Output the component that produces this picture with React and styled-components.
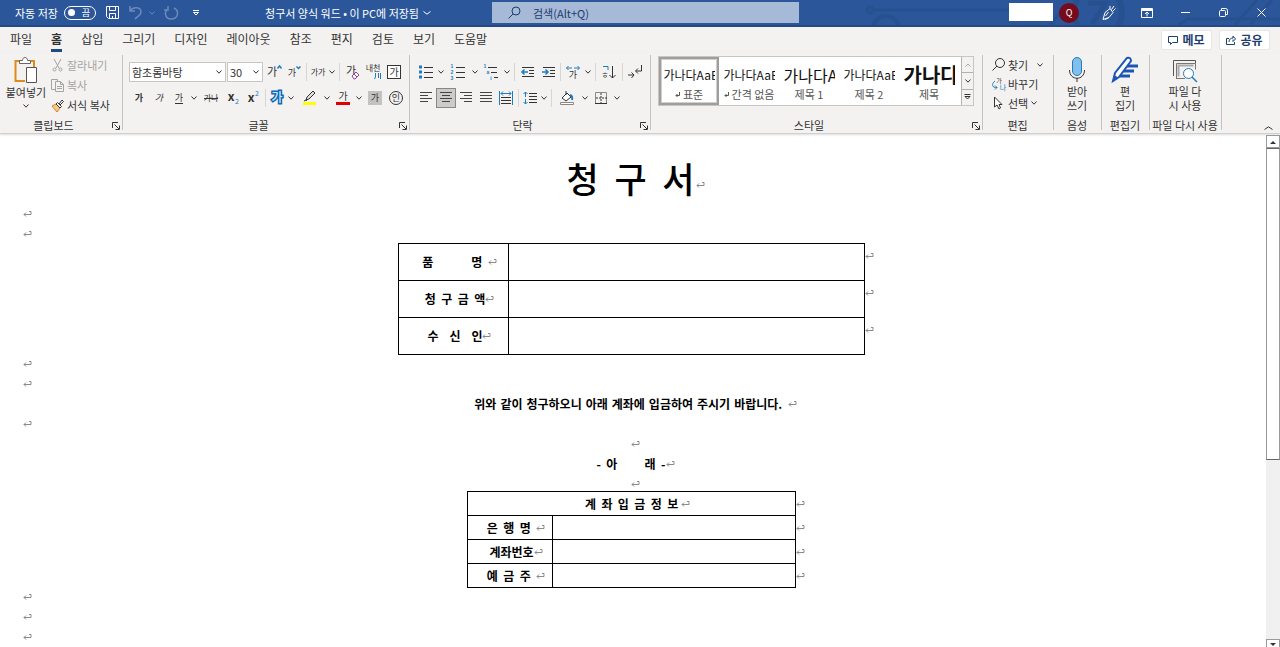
import React, { useState } from 'react';
import styled, { createGlobalStyle } from 'styled-components';

const GlobalStyle = createGlobalStyle`
  * {
    box-sizing: border-box;
  }

  body {
    margin: 0;
    background: #fff;
    color: #333;
    font-family: 'Noto Sans CJK KR', sans-serif;
    font-size: 11px;
    line-height: 14px;
  }

  button, input, select {
    font: inherit;
    color: inherit;
    margin: 0;
    padding: 0;
    border: 0;
    background: none;
  }

  svg {
    display: block;
    flex: none;
  }
`;

const App = styled.div`
  display: flex;
  flex-direction: column;
  height: 100vh;
  overflow: hidden;
`;

// Title bar
const TitleBar = styled.header`
  position: relative;
  display: grid;
  grid-template-columns: 492fr 307fr 481fr;
  align-items: center;
  height: 27px;
  flex: none;
  background: #2b579a;
  border-bottom: 2px solid #244a86;
  color: #fff;
`;

const Circuit = styled.svg`
  position: absolute;
  top: 0;
  right: 0;
`;

const TitleLeft = styled.div`
  display: flex;
  align-items: center;
  padding: 0 61px 0 15px;
`;

const AutoSave = styled.label`
  display: flex;
  align-items: center;
  gap: 6px;
  white-space: nowrap;
`;

const Switch = styled.span`
  display: flex;
  align-items: center;
  justify-content: space-between;
  width: 32px;
  height: 14px;
  padding: 0 5px 0 3px;
  border: 1px solid #fff;
  border-radius: 7px;
  font-size: 9px;
`;

const SwitchDot = styled.input`
  appearance: none;
  width: 7px;
  height: 7px;
  border-radius: 50%;
  background: #fff;
`;

const QuickButton = styled.button`
  display: flex;
  align-items: center;
  justify-content: center;
  gap: 6px;
  height: 20px;
  margin-left: 9px;
  opacity: ${props => (props.disabled ? 0.3 : 1)};
`;

const DocName = styled.button`
  display: flex;
  align-items: center;
  gap: 4px;
  margin-left: auto;
  white-space: nowrap;
`;

const SearchBox = styled.label`
  display: flex;
  align-items: center;
  gap: 12px;
  height: 21px;
  padding-left: 16px;
  background: #a6b9d6;
  color: #1c3c70;
`;

const SearchInput = styled.input`
  flex: 1;
  min-width: 0;
  outline: 0;

  &::placeholder {
    color: #1c3c70;
    opacity: 1;
  }
`;

const TitleRight = styled.div`
  position: relative;
  display: flex;
  align-items: center;
  justify-content: flex-end;
`;

const NameMask = styled.div`
  width: 44px;
  height: 18px;
  margin: 0 6px 2px 0;
  background: #fff;
`;

const Avatar = styled.button`
  width: 20px;
  height: 20px;
  margin-right: 11px;
  border-radius: 50%;
  background: #750b1c;
  font-size: 9px;
`;

const WindowButton = styled.button`
  display: flex;
  align-items: center;
  justify-content: center;
  width: 38px;
  height: 24px;
`;

// Tabs
const TabBar = styled.nav`
  display: flex;
  align-items: center;
  flex: none;
  height: 26px;
  padding-right: 10px;
  background: #f3f2f1;
  font-size: 12px;
`;

const Tabs = styled.div`
  display: flex;
  gap: 19px;
  margin-left: 10px;
`;

const Tab = styled.button`
  height: 23px;
  padding-top: 1px;
  border-bottom: 3px solid ${props => (props.$active ? '#204a87' : 'transparent')};
  font-weight: ${props => (props.$active ? 700 : 400)};
  white-space: nowrap;
`;

const TabActions = styled.div`
  display: flex;
  gap: 7px;
  margin-left: auto;
`;

const ActionButton = styled.button`
  display: flex;
  align-items: center;
  justify-content: center;
  gap: 4px;
  width: 51px;
  height: 20px;
  border: 1px solid #e6e6e6;
  border-radius: 2px;
  background: #fff;
  color: #1f3e70;
  font-weight: 700;
`;

// Ribbon
const Ribbon = styled.div`
  display: flex;
  flex: none;
  height: 81px;
  padding-top: 2px;
  background: #f3f2f1;
  border-bottom: 1px solid #d2d0ce;
  box-shadow: 0 1px 2px #ddd;
`;

const GroupBox = styled.section`
  position: relative;
  display: flex;
  flex-direction: column;
  flex: none;
  width: ${props => props.$width}px;

  &::after {
    content: '';
    position: absolute;
    top: 0;
    right: 0;
    width: 1px;
    height: 75px;
    background: #c4c2c0;
  }
`;

const GroupBody = styled.div`
  display: flex;
  flex: 1;
  flex-direction: ${props => (props.$rows ? 'column' : 'row')};
  padding: 0 6px;
`;

const GroupFooter = styled.div`
  display: flex;
  align-items: center;
  justify-content: center;
  height: 16px;
  padding-right: ${props => (props.$launcher ? 16 : 2)}px;
  white-space: nowrap;
`;

const Launcher = styled.button`
  position: absolute;
  right: 3px;
  bottom: 3px;
`;

const ToolRow = styled.div`
  display: flex;
  align-items: center;
  height: 26px;

  &:first-child {
    margin-top: 4px;
  }
`;

const Tool = styled.button`
  display: flex;
  align-items: center;
  justify-content: center;
  flex: none;
  width: ${props => props.$width || 20}px;
  height: 20px;
  border: 1px solid ${props => (props.$active ? '#8a8886' : 'transparent')};
  background: ${props => (props.$active ? '#cdcbca' : 'transparent')};
`;

const Divider = styled.span`
  flex: none;
  width: 1px;
  height: 18px;
  margin: 0 2px;
  background: #d8d6d4;
`;

const SelectWrap = styled.label`
  display: flex;
  align-items: center;
  position: relative;
  width: ${props => props.$width}px;
  height: 20px;
  margin-right: 1px;
  border: 1px solid #c8c6c4;
  background: #fff;

  svg {
    position: absolute;
    right: 3px;
    pointer-events: none;
  }
`;

const Select = styled.select`
  appearance: none;
  width: 100%;
  height: 100%;
  padding-left: 2px;
`;

const BigButton = styled.button`
  display: flex;
  flex-direction: column;
  align-items: center;
  align-self: flex-start;
  width: 100%;
  padding-right: 2px;
  white-space: nowrap;

  svg {
    margin: 1px 0;
  }
`;

const PasteButton = styled(BigButton)`
  width: 44px;
  margin-left: -2px;
  padding: 1px 0 0;

  svg + span {
    margin-bottom: 4px;
  }
`;

const SmallStack = styled.div`
  display: flex;
  flex-direction: column;
  padding: 0 3px;
`;

const SmallButton = styled.button`
  display: flex;
  align-items: center;
  gap: 3px;
  height: ${props => props.$height || 20}px;
  white-space: nowrap;
  color: ${props => (props.disabled ? '#a6a4a2' : '#333')};

  svg:last-child {
    margin-left: ${props => props.$chevronGap || 0}px;
  }
`;

// Style gallery
const Gallery = styled.div`
  display: flex;
  align-self: flex-start;
  flex: 1;
  height: 50px;
  margin: 1px 3px 0 1px;
  border: 1px solid #c8c6c4;
  background: #fff;
`;

const StyleItem = styled.button`
  display: flex;
  flex-direction: column;
  align-items: center;
  flex: none;
  width: 60px;
  height: 48px;
  padding: 0 3px;
  border: 2px solid ${props => (props.$active ? '#a09e9c' : 'transparent')};
  outline: ${props => (props.$active ? '1px solid #d0d0d0' : 'none')};
  outline-offset: -3px;
`;

const StylePreview = styled.span`
  width: 51px;
  height: 28px;
  overflow: hidden;
  color: #111;
  font-size: ${props => props.$size}px;
  font-weight: ${props => (props.$bold ? 700 : 400)};
  line-height: 32px;
  text-align: left;
  white-space: nowrap;
`;

const StyleName = styled.span`
  display: flex;
  align-items: center;
  gap: 3px;
  white-space: nowrap;
  color: #555;
`;

const GalleryScroll = styled.div`
  display: flex;
  flex-direction: column;
  width: 12px;
  margin-left: auto;
`;

const GalleryButton = styled.button`
  display: flex;
  align-items: center;
  justify-content: center;
  flex: 1;
  border: 1px solid #b4b2b0;
  border-width: 0 0 1px 1px;
  background: #f3f2f1;

  &:last-child {
    border-bottom: 0;
  }
`;

const CollapseButton = styled.button`
  align-self: flex-end;
  margin: 0 7px 3px auto;
`;

// Document
const Workspace = styled.div`
  display: flex;
  flex: 1;
  min-height: 0;
`;

const Page = styled.main`
  flex: 1;
  overflow: hidden;
  padding-right: 3px;
  color: #000;
  font-size: 12px;
  font-weight: 700;
  white-space: pre;
`;

const DocTitle = styled.h1`
  display: flex;
  align-items: center;
  justify-content: center;
  height: 70px;
  margin: 0;
  padding: 18px 0 0 8px;
  font-size: 35px;
  font-weight: 500;
  line-height: 48px;

  svg {
    margin: 13px 0 0 1px;
  }
`;

const Paragraph = styled.p`
  display: flex;
  align-items: center;
  justify-content: ${props => (props.$center ? 'center' : 'flex-start')};
  height: 20px;
  margin: 0;
  padding-left: ${props => (props.$center ? 8 : 23)}px;
`;

const FormTable = styled.table`
  width: ${props => props.$width}px;
  margin: ${props => props.$top}px auto -1px;
  border-collapse: collapse;
  table-layout: fixed;

  th, td {
    position: relative;
    height: ${props => props.$row}px;
    padding: 0;
    border: 1px solid #000;
    text-align: center;
  }

  th:not([colspan]) {
    width: ${props => props.$label}px;
  }
`;

const CellText = styled.span`
  display: flex;
  align-items: center;
  justify-content: center;
  padding-left: 12px;
`;

const RowEnd = styled.span`
  position: absolute;
  top: 8px;
  right: -10px;
`;

const ScrollBar = styled.div`
  display: flex;
  flex-direction: column;
  flex: none;
  width: 14px;
  margin-top: 1px;
  background: #f0f0f0;
`;

const ScrollButton = styled.button`
  display: flex;
  align-items: center;
  justify-content: center;
  flex: none;
  height: 13px;
  border: 1px solid #9a9a9a;
  background: #fff;

  &:last-child {
    height: 8px;
    margin-top: auto;
    border-bottom: 0;
  }
`;

const ScrollThumb = styled.div`
  height: 61%;
  border: 1px solid #9a9a9a;
  border-top-color: #666;
  border-bottom-color: #666;
  background: #fff;
`;

const BLUE = '#1e7cc0';

const Icon = ({ w = 16, h = 16, children, ...rest }) => (
  <svg
    width={w}
    height={h}
    viewBox={`0 0 ${w} ${h}`}
    fill="none"
    stroke="currentColor"
    strokeWidth="1"
    overflow="visible"
    aria-hidden="true"
    {...rest}
  >
    {children}
  </svg>
);

const Letter = ({ x = 8, y = 12, size = 11, color = '#333', weight = 400, ...rest }) => (
  <text x={x} y={y} fontSize={size} fontWeight={weight} fill={color} stroke="none" textAnchor="middle" {...rest} />
);

const ListMark = ({ x, y, children }) => (
  <Letter x={x} y={y} size={5} color={BLUE} weight={700} fontFamily="Liberation Sans, sans-serif">{children}</Letter>
);

const Chevron = ({ up, size = 6 }) => (
  <Icon w={size} h={4}>
    <path d={up ? `M.5 3.5L${size / 2} .8l${size / 2 - 0.5} 2.7` : `M.5 .5l${size / 2 - 0.5} 2.7L${size - 0.5} .5`} />
  </Icon>
);

const ReturnMark = () => (
  <Icon w={9} h={8} stroke="#8a8a8a">
    <path d="M6 1.500h2v3H1M3 2.500l-2 2 2 2" />
  </Icon>
);

const Lines = ({ rows }) => rows.map(([from, to], i) => (
  <path key={i} d={`M${from} ${2.5 + i * 3}H${to}`} stroke="#444" />
));

const MenuArrow = ({ label }) => (
  <Tool $width={10} aria-label={`${label} 옵션`}><Chevron /></Tool>
);

// Ribbon group with its caption and optional dialog launcher
const Group = ({ title, width, rows, launcher, children }) => (
  <GroupBox $width={width}>
    <GroupBody $rows={rows}>{children}</GroupBody>
    <GroupFooter $launcher={launcher}>{title}</GroupFooter>
    {launcher && (
      <Launcher aria-label={`${title} 설정`}>
        <Icon w={8} h={8}><path d="M.5 6V.5H6M2.5 2.5L7 7M7.5 3.5v4h-4" /></Icon>
      </Launcher>
    )}
  </GroupBox>
);

const TABS = ['파일', '홈', '삽입', '그리기', '디자인', '레이아웃', '참조', '편지', '검토', '보기', '도움말'];

const STYLES = [
  { name: '표준', preview: '가나다AaB', size: 12, mark: true },
  { name: '간격 없음', preview: '가나다AaB', size: 12, mark: true },
  { name: '제목 1', preview: '가나다A', size: 16 },
  { name: '제목 2', preview: '가나다AaB', size: 12 },
  { name: '제목', preview: '가나다', size: 20, bold: true },
];

const CLAIM_ROWS = ['품              명  ', '청  구  금  액', '수    신    인'];
const BANK_ROWS = ['은  행  명  ', '계좌번호', '예  금  주  '];

// The notice is set with three-per-em spaces between the words
const NOTICE = '위와 같이 청구하오니 아래 계좌에 입금하여 주시기 바랍니다.'.replaceAll(' ', '\u2004');

const TitleArea = () => (
  <TitleBar>
    <Circuit width="420" height="25" viewBox="0 0 420 25" fill="none" stroke="#27508f" strokeWidth="3" aria-hidden="true">
      <circle cx="10" cy="10" r="3" />
      <path d="M13 10H150M190 25l10-12M318 25l10-6h92M375 25l22-25M390 25l22-25" />
      <circle cx="26" cy="29" r="13" strokeWidth="4" />
      <circle cx="238" cy="12" r="24" strokeWidth="6" />
      <path d="M228 3h18L232 24" strokeWidth="5" />
    </Circuit>
    <TitleLeft>
      <AutoSave>
        자동 저장
        <Switch><SwitchDot type="checkbox" />끔</Switch>
      </AutoSave>
      <QuickButton aria-label="저장">
        <Icon w={15} h={15}>
          <path d="M1.500 1.500h12v12h-10l-2-2zM4.500 1.500v4h6v-4M4.500 13.500v-5h6v5M7.500 11v2" />
        </Icon>
      </QuickButton>
      <QuickButton aria-label="실행 취소" disabled>
        <Icon w={14} h={15} strokeWidth="1.500"><path d="M1 1v5h5M1 6c3-5 11-4 11 1 0 3-3 4-6 7" /></Icon>
        <Chevron />
      </QuickButton>
      <QuickButton aria-label="다시 실행" disabled>
        <Icon w={15} h={15} strokeWidth="1.500"><path d="M4 1v4H0M4 4C-1 8 2 14 7 14c7 0 9-8 3-11" /></Icon>
      </QuickButton>
      <QuickButton aria-label="빠른 실행 도구 모음">
        <Icon w={15} h={6}><path d="M5 .5h6M5.500 2.500L8 5l2.500-2.500z" /></Icon>
      </QuickButton>
      <DocName>청구서 양식 워드 • 이 PC에 저장됨 <Chevron size={8} /></DocName>
    </TitleLeft>
    <SearchBox>
      <Icon w={13} h={13}><circle cx="8" cy="5" r="4" /><path d="M5 8L.5 12.500" /></Icon>
      <SearchInput type="text" placeholder="검색(Alt+Q)" aria-label="검색" />
    </SearchBox>
    <TitleRight>
      <NameMask />
      <Avatar>Q</Avatar>
      <WindowButton aria-label="그리기 도구">
        <Icon w={14} h={14}><path d="M1 13.500l2-7 5-4 3 4-4 5zM3 13.500l4-2M8 2.500V0M9.500 3.500L12 0M11 5l2.500-2.500M3.500 10l3-4" /></Icon>
      </WindowButton>
      <WindowButton aria-label="리본 표시 옵션">
        <Icon w={12} h={10}><path d="M.5 .5h11v9H.5zM.5 2.500h11M6 8.500v-4M4 6l2-2 2 2" /><path d="M1 1.500h10" /></Icon>
      </WindowButton>
      <WindowButton aria-label="최소화"><Icon w={9} h={9}><path d="M0 4.500h9" /></Icon></WindowButton>
      <WindowButton aria-label="이전 크기로">
        <Icon w={9} h={9}><rect x=".5" y="2.500" width="6" height="6" rx="1" /><path d="M2.500 2V.5h4q2 0 2 2v4H7" /></Icon>
      </WindowButton>
      <WindowButton aria-label="닫기"><Icon w={9} h={9}><path d="M.5 .5l8 8M8.500 .5l-8 8" /></Icon></WindowButton>
    </TitleRight>
  </TitleBar>
);

const ClipboardGroup = () => (
  <Group title="클립보드" width={123} launcher>
    <PasteButton>
      <Icon w={24} h={27}>
        <path d="M6 4H1.500v20H11M17 4h3v6" stroke="#e08a1e" strokeWidth="2" />
        <path d="M5.500 6.500V3.500h3c0-4 5-4 5 0h3v3z" fill="#fff" stroke="#666" />
        <path d="M12.500 10.500h10v15h-10z" fill="#fff" stroke="#555" />
      </Icon>
      <span>붙여넣기</span>
      <Chevron />
    </PasteButton>
    <SmallStack>
      <SmallButton disabled>
        <Icon w={13} h={14}><path d="M3 1l5 9M10 1L5 10" /><circle cx="3.500" cy="11.500" r="1.500" /><circle cx="9.500" cy="11.500" r="1.500" /></Icon>
        잘라내기
      </SmallButton>
      <SmallButton disabled>
        <Icon w={13} h={14}><path d="M4 11.500H.5V1.500h6v2M4.500 3.500h5l3 3v7h-8zM9.500 3.500v3h3M6 8.500h5M6 10.500h5" /></Icon>
        복사
      </SmallButton>
      <SmallButton>
        <Icon w={13} h={13}>
          <path d="M1 7l4-2 4 4-3 4z" fill="#f8c98a" stroke="#d9822b" />
          <path d="M5 5l1.500-1.500 4 4L9 9zM8 5l3-4 1.500 1.500L9 6" fill="#fff" stroke="#333" />
        </Icon>
        서식 복사
      </SmallButton>
    </SmallStack>
  </Group>
);

const FontGroup = () => (
  <Group title="글꼴" width={287} rows launcher>
    <ToolRow>
      <SelectWrap $width={97}>
        <Select aria-label="글꼴"><option>함초롬바탕</option></Select>
        <Chevron />
      </SelectWrap>
      <SelectWrap $width={36}>
        <Select aria-label="글꼴 크기"><option>30</option></Select>
        <Chevron />
      </SelectWrap>
      <Tool aria-label="글꼴 크기 크게">
        <Icon><Letter x={6}>가</Letter><path d="M11.500 4.500L13.500 2l2 2.500" stroke={BLUE} strokeWidth="1.500" /></Icon>
      </Tool>
      <Tool aria-label="글꼴 크기 작게">
        <Icon><Letter x={6} size={9}>가</Letter><path d="M10.500 2.500l2 2 2-2" stroke={BLUE} strokeWidth="1.500" /></Icon>
      </Tool>
      <Divider />
      <Tool aria-label="대/소문자 바꾸기" $width={18}><Icon><Letter size={8} y={11}>가가</Letter></Icon></Tool>
      <MenuArrow label="대/소문자" />
      <Divider />
      <Tool aria-label="서식 지우기" $width={22}>
        <Icon><Letter x={6} y={11}>가</Letter><path d="M7 12l4-4 3 3-4 4H9z" fill="#fff" stroke="#8b3fa8" /><path d="M9 10l3 3" stroke="#8b3fa8" /></Icon>
      </Tool>
      <Tool aria-label="윗주 달기">
        <Icon><Letter x={7} y={7} size={8}>내천</Letter><path d="M9.500 9v4l-1 2M12.500 9v5M14.500 9v6" stroke={BLUE} /></Icon>
      </Tool>
      <Tool aria-label="문자 테두리">
        <Icon><rect x="1.500" y="1.500" width="13" height="13" fill="#fff" /><Letter size={10}>가</Letter></Icon>
      </Tool>
    </ToolRow>
    <ToolRow>
      <Tool aria-label="굵게"><Icon><Letter size={9} y={11} weight={700}>가</Letter></Icon></Tool>
      <Tool aria-label="기울임꼴"><Icon><Letter size={9} y={11} fontStyle="italic">가</Letter></Icon></Tool>
      <Tool aria-label="밑줄"><Icon><Letter size={9} y={11}>가</Letter><path d="M4 13.500h8" /></Icon></Tool>
      <MenuArrow label="밑줄" />
      <Tool aria-label="취소선" $width={24}><Icon><Letter size={8} y={11}>가나</Letter><path d="M1 8.500h14" /></Icon></Tool>
      <Tool aria-label="아래 첨자">
        <Icon><Letter x={6} y={11} size={12} weight={700}>x</Letter><Letter x={12} y={14} size={7} color={BLUE}>2</Letter></Icon>
      </Tool>
      <Tool aria-label="위 첨자">
        <Icon><Letter x={6} y={12} size={12} weight={700}>x</Letter><Letter x={12} y={6} size={7} color={BLUE}>2</Letter></Icon>
      </Tool>
      <Divider />
      <Tool aria-label="텍스트 효과" $width={18}>
        <Icon><Letter y={12} size={12} color="#c9e8fb" weight={500} stroke="#1167b1" strokeWidth="3" paintOrder="stroke">가</Letter></Icon>
      </Tool>
      <MenuArrow label="텍스트 효과" />
      <Tool aria-label="텍스트 강조 색" $width={26}>
        <Icon><path d="M5 10l1-3 6-6 2 2-6 6zM3 11l2-1 1 1" fill="#ddd" /><path d="M2 13.500h13" stroke="#ff0" strokeWidth="3" /></Icon>
      </Tool>
      <MenuArrow label="텍스트 강조" />
      <Tool aria-label="글꼴 색" $width={22}>
        <Icon><Letter y={10} size={10}>가</Letter><path d="M1 13.500h14" stroke="#e00000" strokeWidth="3" /></Icon>
      </Tool>
      <MenuArrow label="글꼴 색" />
      <Tool aria-label="문자 음영" $width={22}>
        <Icon><rect x="1" y="1" width="14" height="14" fill="#c4c2c0" stroke="none" /><Letter size={9} y={11}>가</Letter></Icon>
      </Tool>
      <Tool aria-label="원 문자"><Icon><circle cx="8" cy="8" r="6.500" /><Letter size={9} y={11}>인</Letter></Icon></Tool>
    </ToolRow>
  </Group>
);

const ParagraphGroup = () => (
  <Group title="단락" width={241} rows launcher>
    <ToolRow>
      <Tool aria-label="글머리 기호">
        <Icon><path d="M1 3h3M1 8h3M1 13h3" stroke={BLUE} strokeWidth="3" /><path d="M6 3.500h9M6 8.500h9M6 13.500h9" /></Icon>
      </Tool>
      <MenuArrow label="글머리 기호" />
      <Tool aria-label="번호 매기기" $width={24}>
        <Icon>
          <ListMark x={2} y={4}>1</ListMark><ListMark x={2} y={10}>2</ListMark><ListMark x={2} y={16}>3</ListMark>
          <path d="M6 3.500h9M6 8.500h9M6 13.500h9" />
        </Icon>
      </Tool>
      <MenuArrow label="번호" />
      <Tool aria-label="다단계 목록" $width={22}>
        <Icon>
          <ListMark x={2} y={4}>1</ListMark><ListMark x={5} y={10}>a</ListMark><ListMark x={8} y={16}>i</ListMark>
          <path d="M5 3.500h9M8 8.500h6M11 13.500h4" />
        </Icon>
      </Tool>
      <MenuArrow label="다단계 목록" />
      <Divider />
      <Tool aria-label="내어쓰기" $width={22}>
        <Icon><path d="M2 3.500h12M9 6.500h5M9 9.500h5M2 12.500h12" /><path d="M8 8H2M4.500 5.500L2 8l2.500 2.500" stroke={BLUE} strokeWidth="1.500" /></Icon>
      </Tool>
      <Tool aria-label="들여쓰기" $width={19}>
        <Icon><path d="M2 3.500h12M9 6.500h5M9 9.500h5M2 12.500h12" /><path d="M1 8h6M4.500 5.500L7 8l-2.500 2.500" stroke={BLUE} strokeWidth="1.500" /></Icon>
      </Tool>
      <Divider />
      <Tool aria-label="한글 모양">
        <Icon><Letter y={14} size={9}>가</Letter><path d="M7 4H1.500M3.500 2l-2 2 2 2M9 4h5.500M12.500 2l2 2-2 2" stroke={BLUE} /></Icon>
      </Tool>
      <MenuArrow label="한글 모양" />
      <Divider />
      <Tool aria-label="정렬" $width={22}>
        <Icon><path d="M2 2.500h5V6" stroke={BLUE} /><Letter x={4} y={14} size={8}>ㅎ</Letter><path d="M11.500 2v12M8.500 11l3 3 3-3" /></Icon>
      </Tool>
      <Divider />
      <Tool aria-label="편집 기호 표시">
        <Icon><path d="M1 11h6M4.500 8.500L7 11l-2.500 3M14.500 1v6H9M11 4.500L8.500 7 11 9.500" /></Icon>
      </Tool>
    </ToolRow>
    <ToolRow>
      <Tool aria-label="왼쪽 맞춤"><Icon><Lines rows={[[2, 14], [2, 10], [2, 14], [2, 10]]} /></Icon></Tool>
      <Tool aria-label="가운데 맞춤" $active><Icon><Lines rows={[[2, 14], [4, 12], [2, 14], [4, 12]]} /></Icon></Tool>
      <Tool aria-label="오른쪽 맞춤"><Icon><Lines rows={[[2, 14], [6, 14], [2, 14], [6, 14]]} /></Icon></Tool>
      <Tool aria-label="양쪽 맞춤"><Icon><Lines rows={[[2, 14], [2, 14], [2, 14], [2, 14]]} /></Icon></Tool>
      <Tool aria-label="균등 분할">
        <Icon><path d="M1.500 1v14M14.500 1v14M3 3.500h10M5 1.500l-2 2 2 2M11 1.500l2 2-2 2" stroke={BLUE} /><path d="M3 7.500h10M3 10.500h10M3 13.500h10" /></Icon>
      </Tool>
      <Divider />
      <Tool aria-label="줄 간격" $width={18}>
        <Icon><path d="M3.500 2v5M1.500 4l2-2 2 2M3.500 9v5M1.500 12l2 2 2-2" stroke={BLUE} /><path d="M7 3.500h8M7 6.500h8M7 9.500h8M7 12.500h8" /></Icon>
      </Tool>
      <MenuArrow label="줄 간격" />
      <Divider />
      <Tool aria-label="음영" $width={26}>
        <Icon><path d="M3 8l5-5 4 4-5 4zM7 1v4" fill="#fff" /><path d="M11 5q3 1 2 5" stroke={BLUE} strokeWidth="2" /><path d="M1.500 12.500h13v2h-13z" stroke="#888" fill="#fff" /></Icon>
      </Tool>
      <MenuArrow label="음영" />
      <Tool aria-label="테두리" $width={22}>
        <Icon><path d="M2.500 2.500h11v11h-11z" stroke="#888" /><path d="M8 3v11M3 8h11" strokeDasharray="2 1" /><path d="M2 13.500h12" /></Icon>
      </Tool>
      <MenuArrow label="테두리" />
    </ToolRow>
  </Group>
);

const StylesGroup = () => {
  const [current, setCurrent] = useState('표준');

  return (
    <Group title="스타일" width={332} launcher>
      <Gallery>
        {STYLES.map(item => (
          <StyleItem key={item.name} $active={item.name === current} onClick={() => setCurrent(item.name)}>
            <StylePreview $size={item.size} $bold={item.bold}>{item.preview}</StylePreview>
            <StyleName>
              {item.mark && <Icon w={5} h={5}><path d="M4.500 0v3.500H1M2.500 2L1 3.500 2.500 5" /></Icon>}
              {item.name}
            </StyleName>
          </StyleItem>
        ))}
        <GalleryScroll>
          <GalleryButton aria-label="위로" disabled><Icon w={6} h={4} stroke="#aaa"><path d="M.5 3.500L3 1l2.500 2.500" /></Icon></GalleryButton>
          <GalleryButton aria-label="아래로"><Chevron /></GalleryButton>
          <GalleryButton aria-label="자세히"><Icon w={7} h={6}><path d="M.5 .5h6M1 2.500L3.500 5 6 2.500z" /></Icon></GalleryButton>
        </GalleryScroll>
      </Gallery>
    </Group>
  );
};

const EditingGroups = () => (
  <>
    <Group title="편집" width={71}>
      <SmallStack>
        <SmallButton $height={19} $chevronGap={6}>
          <Icon w={13} h={13}><circle cx="8" cy="5" r="4.500" /><path d="M5 8L.5 12.500" /></Icon>
          찾기
          <Chevron />
        </SmallButton>
        <SmallButton $height={19}>
          <Icon w={13} h={14}>
            <Letter x={7} y={6} size={6}>가</Letter><Letter x={11} y={13} size={7} color={BLUE}>나</Letter>
            <path d="M3 4C-1 7 0 11 5 10.500M3 8.500l2 2-2 2" stroke={BLUE} />
          </Icon>
          바꾸기
        </SmallButton>
        <SmallButton $height={19}>
          <Icon w={13} h={13}><path d="M2.500 1v10l2.500-2 2 4 1.500-1-1.500-3.500H10z" fill="#fff" /></Icon>
          선택
          <Chevron />
        </SmallButton>
      </SmallStack>
    </Group>
    <Group title="음성" width={48}>
      <BigButton>
        <Icon w={18} h={27}>
          <rect x="4.500" y="1.500" width="9" height="18" rx="4.500" fill="#83bfec" stroke={BLUE} />
          <path d="M1.500 14c0 11 15 11 15 0M9 22v4" />
        </Icon>
        <span>받아</span>
        <span>쓰기</span>
      </BigButton>
    </Group>
    <Group title="편집기" width={48}>
      <BigButton>
        <Icon w={26} h={27} stroke="#1c55b4">
          <path d="M14 10h12M11 15h11M8 20h10" strokeWidth="3" />
          <path d="M1 25l2-8L15 2q4-1 4 3L7 21z" fill="#fff" strokeWidth="2" />
          <path d="M1 25l2-5 3 2z" fill="#1c55b4" />
        </Icon>
        <span>편</span>
        <span>집기</span>
      </BigButton>
    </Group>
    <Group title="파일 다시 사용" width={72}>
      <BigButton>
        <Icon w={26} h={27}>
          <path d="M1.500 20V4.500h22v3" stroke="#555" />
          <path d="M4.500 22.500v-15h19v6M4 22.500h9" stroke="#777" />
          <path d="M6.500 20.500v-11h15" stroke="#aaa" strokeWidth="2" />
          <circle cx="16.500" cy="17.500" r="5" fill="#fff" stroke={BLUE} /><path d="M20 21l5 5" stroke={BLUE} strokeWidth="1.500" />
        </Icon>
        <span>파일 다</span>
        <span>시 사용</span>
      </BigButton>
    </Group>
  </>
);

const Document = () => (
  <Page>
    <DocTitle>청  구  서<ReturnMark /></DocTitle>
    <Paragraph><ReturnMark /></Paragraph>
    <Paragraph><ReturnMark /></Paragraph>
    <FormTable $width={467} $row={37} $label={110} $top={-1}>
      <tbody>
        {CLAIM_ROWS.map(label => (
          <tr key={label}>
            <th scope="row"><CellText>{label}<ReturnMark /></CellText></th>
            <td><RowEnd><ReturnMark /></RowEnd></td>
          </tr>
        ))}
      </tbody>
    </FormTable>
    <Paragraph><ReturnMark /></Paragraph>
    <Paragraph><ReturnMark /></Paragraph>
    <Paragraph $center>{NOTICE}{'  '}<ReturnMark /></Paragraph>
    <Paragraph><ReturnMark /></Paragraph>
    <Paragraph $center><ReturnMark /></Paragraph>
    <Paragraph $center>{'-  아          래  -'}<ReturnMark /></Paragraph>
    <Paragraph $center><ReturnMark /></Paragraph>
    <FormTable $width={329} $row={24} $label={85} $top={-3}>
      <colgroup>
        <col width="85" />
        <col />
      </colgroup>
      <tbody>
        <tr>
          <th colSpan={2}><CellText>{'계  좌  입  금  정  보 '}<ReturnMark /></CellText><RowEnd><ReturnMark /></RowEnd></th>
        </tr>
        {BANK_ROWS.map(label => (
          <tr key={label}>
            <th scope="row"><CellText>{label}<ReturnMark /></CellText></th>
            <td><RowEnd><ReturnMark /></RowEnd></td>
          </tr>
        ))}
      </tbody>
    </FormTable>
    <Paragraph><ReturnMark /></Paragraph>
    <Paragraph><ReturnMark /></Paragraph>
    <Paragraph><ReturnMark /></Paragraph>
  </Page>
);

const WordWindow = () => {
  const [tab, setTab] = useState('홈');

  return (
    <App>
      <GlobalStyle />
      <TitleArea />
      <TabBar>
        <Tabs>
          {TABS.map(name => (
            <Tab key={name} $active={name === tab} onClick={() => setTab(name)}>{name}</Tab>
          ))}
        </Tabs>
        <TabActions>
          <ActionButton>
            <Icon w={10} h={10}><path d="M.5 1.500h9v6h-5l-2 2v-2h-2z" /></Icon>
            메모
          </ActionButton>
          <ActionButton>
            <Icon w={10} h={10}><path d="M3 3.500H.5v6h8V7M3 7c0-3 2-4 4-4V1l2.500 3L7 6.500v-2" /></Icon>
            공유
          </ActionButton>
        </TabActions>
      </TabBar>
      <Ribbon>
        <ClipboardGroup />
        <FontGroup />
        <ParagraphGroup />
        <StylesGroup />
        <EditingGroups />
        <CollapseButton aria-label="리본 축소"><Chevron up size={9} /></CollapseButton>
      </Ribbon>
      <Workspace>
        <Document />
        <ScrollBar>
          <ScrollButton aria-label="위로 스크롤"><Icon w={6} h={4} fill="#333" stroke="none"><path d="M0 4l3-3 3 3z" /></Icon></ScrollButton>
          <ScrollThumb />
          <ScrollButton aria-label="아래로 스크롤"><Icon w={6} h={4} fill="#333" stroke="none"><path d="M0 1h6L3 4z" /></Icon></ScrollButton>
        </ScrollBar>
      </Workspace>
    </App>
  );
};

export default WordWindow;
